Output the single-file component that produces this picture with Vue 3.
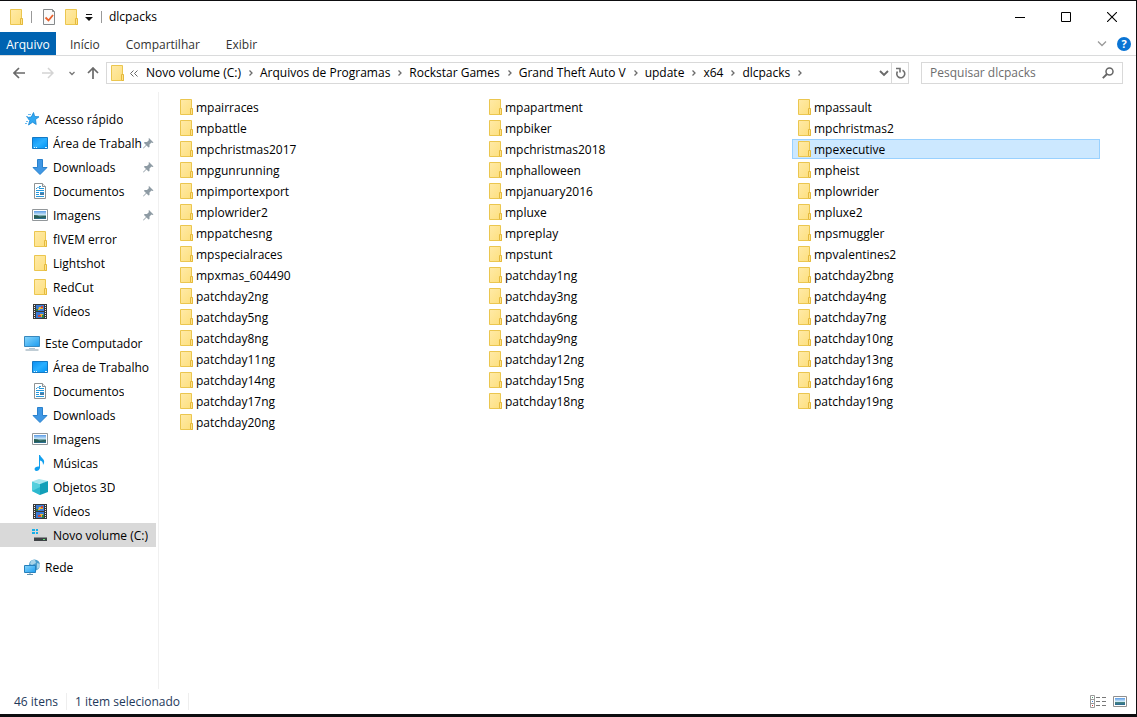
<script setup>
import { ref } from 'vue'

const tabs = ['Início', 'Compartilhar', 'Exibir']
const crumbs = ['Novo volume (C:)', 'Arquivos de Programas', 'Rockstar Games', 'Grand Theft Auto V', 'update', 'x64', 'dlcpacks']

const groups = [
  {
    name: 'Acesso rápido', icon: 'star',
    items: [
      { name: 'Área de Trabalho', icon: 'desktop', pinned: true },
      { name: 'Downloads', icon: 'download', pinned: true },
      { name: 'Documentos', icon: 'document', pinned: true },
      { name: 'Imagens', icon: 'picture', pinned: true },
      { name: 'fIVEM error', icon: 'folder' },
      { name: 'Lightshot', icon: 'folder' },
      { name: 'RedCut', icon: 'folder' },
      { name: 'Vídeos', icon: 'video' },
    ],
  },
  {
    name: 'Este Computador', icon: 'computer',
    items: [
      { name: 'Área de Trabalho', icon: 'desktop' },
      { name: 'Documentos', icon: 'document' },
      { name: 'Downloads', icon: 'download' },
      { name: 'Imagens', icon: 'picture' },
      { name: 'Músicas', icon: 'music' },
      { name: 'Objetos 3D', icon: 'cube' },
      { name: 'Vídeos', icon: 'video' },
      { name: 'Novo volume (C:)', icon: 'drive', current: true },
    ],
  },
  { name: 'Rede', icon: 'network', items: [] },
]

const files = [
  'mpairraces', 'mpapartment', 'mpassault',
  'mpbattle', 'mpbiker', 'mpchristmas2',
  'mpchristmas2017', 'mpchristmas2018', 'mpexecutive',
  'mpgunrunning', 'mphalloween', 'mpheist',
  'mpimportexport', 'mpjanuary2016', 'mplowrider',
  'mplowrider2', 'mpluxe', 'mpluxe2',
  'mppatchesng', 'mpreplay', 'mpsmuggler',
  'mpspecialraces', 'mpstunt', 'mpvalentines2',
  'mpxmas_604490', 'patchday1ng', 'patchday2bng',
  'patchday2ng', 'patchday3ng', 'patchday4ng',
  'patchday5ng', 'patchday6ng', 'patchday7ng',
  'patchday8ng', 'patchday9ng', 'patchday10ng',
  'patchday11ng', 'patchday12ng', 'patchday13ng',
  'patchday14ng', 'patchday15ng', 'patchday16ng',
  'patchday17ng', 'patchday18ng', 'patchday19ng',
  'patchday20ng',
]
const selected = ref('mpexecutive')
const query = ref('')
</script>

<template>
  <svg class="defs" aria-hidden="true">
    <defs>
      <linearGradient id="gFolder" x1="0" y1="0" x2="1" y2="1"><stop offset="0" stop-color="#ffeaa8" /><stop offset="1" stop-color="#fddf7c" /></linearGradient>
      <linearGradient id="gBlue" x1="0" y1="0" x2="1" y2="1"><stop offset="0" stop-color="#0a8df0" /><stop offset=".5" stop-color="#2bb0ff" /><stop offset="1" stop-color="#0094f5" /></linearGradient>
      <linearGradient id="gScreen" x1="0" y1="0" x2="1" y2="1"><stop offset="0" stop-color="#8ad6fb" /><stop offset="1" stop-color="#1a9cf0" /></linearGradient>
      <linearGradient id="gSky" x1="0" y1="0" x2="0" y2="1"><stop offset="0" stop-color="#5b9be6" /><stop offset=".5" stop-color="#cfeaf8" /><stop offset=".6" stop-color="#4b8580" /><stop offset="1" stop-color="#276a94" /></linearGradient>
      <symbol id="folder" viewBox="0 0 16 16">
        <path d="M2.500.5h11v9.500h1v5.500h-12z" fill="url(#gFolder)" stroke="#ebc64f" />
        <path d="M12.500 15v-5.500h2v6h-2" fill="#ffe38a" stroke="#e4b93c" />
      </symbol>
      <symbol id="star" viewBox="0 0 16 16">
        <path d="M9.500 1.500l1.200 4 4.300.3-3.500 2.700.7 5-3.600-2.300-4.100 2.800 1.300-4.700-2.500-2.800 4-.5z" fill="#31a8f2" stroke="#1686d4" stroke-width=".8" />
        <path d="M4 3.500h3M2 5.500h2M4 8.500h1M2 10.500h2M1 12.500h2" stroke="#6cbcf0" />
      </symbol>
      <symbol id="desktop" viewBox="0 0 16 16">
        <path d="M.5 2.500h15v11h-15z" fill="url(#gBlue)" stroke="#1479c4" />
        <path d="M2 12.500h1M13 12.500h2M4 12.500h1" stroke="#e5f6ff" />
      </symbol>
      <symbol id="download" viewBox="0 0 16 16">
        <path d="M5.500.5h5v8h4.500l-7 7-7-7h4.500z" fill="#3f97e4" stroke="#2981cd" />
      </symbol>
      <symbol id="document" viewBox="0 0 16 16">
        <path d="M2.500.5h8l3 3v12h-11z" fill="#fff" stroke="#8d9294" />
        <path d="M10.500.5v3h3" fill="#eee" stroke="#8d9294" />
        <path d="M4 5.500h1M7 3.500h2M7 5.500h5M4 7.500h8M4 9.500h3M4 11.500h3M4 13.500h8M8 9.500h4" stroke="#2598dc" />
        <path d="M5 4.500h3" stroke="#75bce5" /><path d="M8 10h4v2h-4z" fill="#4c7ca4" />
      </symbol>
      <symbol id="picture" viewBox="0 0 16 16">
        <path d="M.5 2.500h15v11h-15z" fill="#fff" stroke="#92979a" />
        <path d="M2 4h12v8H2z" fill="url(#gSky)" /><path d="M2 8q4 0 6 2 3-1 6-1v1.500l-12 1z" fill="#285e55" />
      </symbol>
      <symbol id="video" viewBox="0 0 16 16">
        <path d="M1 1h14v15H1z" fill="#393939" />
        <path d="M4 2h8v6H4zM4 9h8v6H4z" fill="#397bd6" />
        <path d="M2.500 2v13M13.500 2v13" stroke="#f1f1f1" stroke-dasharray="1 1" />
        <path d="M7 4h4v2H8v1H6zM8 11h3v3H8z" fill="#eab833" /><path d="M9 3h2v2H9zM6 12h3v2H6z" fill="#cf473d" /><path d="M4 6h2v2H4zM10 12h2v3h-2z" fill="#2c8147" />
      </symbol>
      <symbol id="computer" viewBox="0 0 16 16">
        <path d="M.5 1.500h15v10h-15z" fill="url(#gScreen)" stroke="#3888bd" />
        <path d="M5 13.500h6" stroke="#afc5d3" /><path d="M1.500 15h13" stroke="#829bab" />
      </symbol>
      <symbol id="music" viewBox="0 0 16 16">
        <path d="M7 0h1c1 3 5 4 4 8l-1 2c0-3-1-4-3-4.500v7.500Q7 16 4.500 16C1.500 15.500 2 11 7 11.500z" fill="#119fee" />
      </symbol>
      <symbol id="cube" viewBox="0 0 16 16">
        <path d="M0 2.500L7 0l9 2-7 3z" fill="#a5e6ef" /><path d="M0 2.500L8 5v11l-8-4z" fill="#55cfdd" /><path d="M8 5l8-3v11l-8 3z" fill="#129fb8" />
        <path d="M0 12l8-4v8z" fill="#2db8ce" />
      </symbol>
      <symbol id="drive" viewBox="0 0 16 16">
        <path d="M0 2h3v2H0zM4 2h2v2H4zM0 5h3v2H0zM4 5h2v2H4z" fill="#17afe8" />
        <path d="M4 8h9l2 3H2z" fill="#d5d7d8" /><path d="M2 10.500h13V14H2z" fill="#3e4246" /><path d="M11 12.500h2" stroke="#65e777" />
      </symbol>
      <symbol id="network" viewBox="0 0 16 16">
        <circle cx="10.500" cy="6" r="5.500" fill="#4a9dcc" /><path d="M7 2q3-2 4-1l1 3-4 2-2-1zM13 4l3 1v3l-3 2z" fill="#a9d4e8" />
        <path d="M.5 6.500h11v7H.5z" fill="url(#gScreen)" stroke="#2680bc" /><path d="M6 13.500v2M3 15.500h6" stroke="#6291ae" />
      </symbol>
      <symbol id="pin" viewBox="0 0 11 12">
        <path d="M6 1l4.500 4.500-1 .5-1-.5-2 2v2.500l-1 .5-2-2L.5 11.500 0 11l3-3-2-2 .5-1H4l2-2-.5-1z" fill="#8e9ba4" />
      </symbol>
      <symbol id="chevron" viewBox="0 0 8 8"><path d="M2.500 1.500L5 4 2.500 6.500" fill="none" stroke="#6b6b6b" stroke-width="1.300" /></symbol>
    </defs>
  </svg>

  <div class="desk">
    <main class="window">
      <header class="title-bar">
        <svg class="ico"><use href="#folder" /></svg>
        <i class="rule" />
        <button class="quick" aria-label="Propriedades">
          <svg class="ico" viewBox="0 0 16 16">
            <path d="M2.500.5h9l2 2v13h-11z" fill="#fafafa" stroke="#85898b" /><path d="M11.500.5v2h2" fill="none" stroke="#85898b" />
            <path d="M4.500 8.500l3 3L12 6" fill="none" stroke="#e8602c" stroke-width="1.800" />
          </svg>
        </button>
        <button class="quick" aria-label="Nova pasta"><svg class="ico"><use href="#folder" /></svg></button>
        <button class="quick more" aria-label="Personalizar">
          <svg width="8" height="8" viewBox="0 0 8 8"><path d="M1 1.500h6" stroke="#111" /><path d="M0 4h8L4 8z" fill="#111" /></svg>
        </button>
        <i class="rule" />
        <h1>dlcpacks</h1>
        <div class="controls">
          <button aria-label="Minimizar"><svg width="10" height="10"><path d="M0 5.500h10" stroke="#000" /></svg></button>
          <button aria-label="Maximizar"><svg width="10" height="10"><path d="M.5.5h9v9h-9z" fill="none" stroke="#000" /></svg></button>
          <button aria-label="Fechar"><svg width="10" height="10"><path d="M0 0l10 10M10 0L0 10" stroke="#000" stroke-width="1.100" /></svg></button>
        </div>
      </header>

      <nav class="ribbon" aria-label="Faixa de opções">
        <button class="tab file">Arquivo</button>
        <button v-for="t in tabs" :key="t" class="tab">{{ t }}</button>
        <button class="expand" aria-label="Expandir"><svg width="10" height="6"><path d="M1 .5l4 4 4-4" fill="none" stroke="#9a9a9a" stroke-width="1.300" /></svg></button>
        <button class="help" aria-label="Ajuda">?</button>
      </nav>

      <div class="nav-bar">
        <div class="arrows">
          <button aria-label="Voltar"><svg width="12" height="12"><path d="M12 6H1M6 1L1 6l5 5" fill="none" stroke="#6a6a6a" stroke-width="1.700" /></svg></button>
          <button aria-label="Avançar" disabled><svg width="12" height="12"><path d="M0 6h11M6 1l5 5-5 5" fill="none" stroke="#d4d4d4" stroke-width="1.500" /></svg></button>
          <button class="recent" aria-label="Recentes"><svg width="6" height="5"><path d="M.5 1L3 3.500 5.500 1" fill="none" stroke="#777" stroke-width="1.300" /></svg></button>
          <button aria-label="Acima"><svg width="12" height="12"><path d="M6 12V1M1 6l5-5 5 5" fill="none" stroke="#6a6a6a" stroke-width="1.700" /></svg></button>
        </div>
        <div class="address">
          <svg class="ico"><use href="#folder" /></svg>
          <svg class="back" width="8" height="7"><path d="M3.500.5l-3 3 3 3M7.500.5l-3 3 3 3" fill="none" stroke="#666" /></svg>
          <div class="crumbs">
            <template v-for="c in crumbs" :key="c">
              <a href="#" @click.prevent>{{ c }}</a>
              <svg class="chev"><use href="#chevron" /></svg>
            </template>
          </div>
          <button class="drop" aria-label="Locais anteriores"><svg width="10" height="7"><path d="M1 1l4 4 4-4" fill="none" stroke="#6a6a6a" stroke-width="1.900" /></svg></button>
          <button class="reload" aria-label="Atualizar">
            <svg width="11" height="12"><path d="M2.500 4.500A4 4 0 1 0 7.500 3.200M1 1.500h4v4" fill="none" stroke="#707070" stroke-width="1.600" /></svg>
          </button>
        </div>
        <div class="search">
          <input v-model="query" type="text" placeholder="Pesquisar dlcpacks" aria-label="Pesquisar dlcpacks">
          <svg width="12" height="12"><circle cx="7.500" cy="4.500" r="3.500" fill="none" stroke="#666" stroke-width="1.500" /><path d="M5 7L.8 11.200" stroke="#666" stroke-width="1.900" /></svg>
        </div>
      </div>

      <div class="body">
        <nav class="tree" aria-label="Painel de navegação">
          <section v-for="g in groups" :key="g.name">
            <a href="#" class="node" @click.prevent><svg class="ico"><use :href="'#' + g.icon" /></svg><span>{{ g.name }}</span></a>
            <a v-for="n in g.items" :key="n.name" href="#" class="node child" :class="{ current: n.current, pinned: n.pinned }" @click.prevent>
              <svg class="ico"><use :href="'#' + n.icon" /></svg><span>{{ n.name }}</span>
              <svg v-if="n.pinned" class="pin"><use href="#pin" /></svg>
            </a>
          </section>
        </nav>
        <div class="files">
          <button v-for="f in files" :key="f" class="item" :class="{ selected: f === selected }" @click="selected = f">
            <svg class="ico"><use href="#folder" /></svg><span>{{ f }}</span>
          </button>
        </div>
      </div>

      <footer class="status">
        <span>46 itens</span><span>1 item selecionado</span>
        <div class="views">
          <button aria-label="Detalhes">
            <svg width="16" height="13"><path d="M.5.500h4v12h-4zM.5 4.500h4M.5 8.500h4" fill="#fff" stroke="#9a9a9a" /><path d="M6 2.500h4M12 2.500h4M6 6.500h4M12 6.500h4M6 10.500h4M12 10.500h4" stroke="#777" /><path d="M2 2.500h1" stroke="#4a9a6a" /><path d="M2 6.500h1" stroke="#3f80d8" /><path d="M2 10.500h1" stroke="#d32f2f" /></svg>
          </button>
          <button aria-label="Ícones grandes">
            <svg width="14" height="11"><path d="M.5.500h13v10H.5z" fill="#fff" stroke="#8f8f8f" /><path d="M2 2h10v7H2z" fill="url(#gSky)" /></svg>
          </button>
        </div>
      </footer>
    </main>
  </div>
</template>

<style>
body { background: #0d0d0f; }
</style>

<style scoped>
.defs { position: absolute; width: 0; height: 0; }
.desk { box-sizing: border-box; height: 100vh; padding: 1px 1px 3px 0; background: #0d0d0f; }
.window { display: flex; flex-direction: column; height: 100%; background: #fff; color: #000; font: 12px/16px "Segoe UI", "Open Sans", "Noto Sans", sans-serif; }
button { margin: 0; padding: 0; border: 0; background: none; color: inherit; font: inherit; display: flex; align-items: center; justify-content: center; }
a { color: inherit; text-decoration: none; }
svg { display: block; flex: none; }
.ico { width: 16px; height: 16px; }

.title-bar { display: flex; align-items: center; height: 31px; flex: none; padding-left: 8px; }
.rule { width: 1px; height: 12px; background: #999; margin: 0 9px 0 7px; }
.quick { margin-right: 6px; }
.quick.more { margin: 0; }
.more + .rule { margin: 0 7px 0 8px; }
h1 { margin: 0; font: inherit; }
.controls { display: flex; margin: 0 1px 0 auto; align-self: stretch; }
.controls button { width: 46px; }

.ribbon { display: flex; align-items: center; height: 23px; flex: none; border-bottom: 1px solid #dadbdc; color: #333; }
.tab { height: 23px; padding: 2px 13px 0; }
.tab.file { width: 56px; padding: 2px 0 0; margin-right: 1px; background: #0063b1; color: #fff; }
.expand { margin-left: auto; }
.help { width: 14px; height: 14px; margin: 0 5px 0 10px; border-radius: 50%; background: #0a74d4; color: #fff; font-size: 11px; line-height: 14px; font-weight: 700; }

.nav-bar { display: flex; align-items: center; height: 34px; flex: none; }
.arrows { display: flex; align-items: center; width: 93px; padding-left: 13px; gap: 17px; }
.arrows .recent { margin: 0 -5px 0 -2px; }
.address, .search { box-sizing: border-box; height: 22px; border: 1px solid #d9d9d9; display: flex; align-items: center; }
.address { flex: 1; min-width: 0; padding-left: 2px; }
.back { margin: 0 8px 0 5px; }
.crumbs { display: flex; align-items: center; flex: 1; min-width: 0; overflow: hidden; white-space: nowrap; }
.chev { width: 8px; height: 8px; margin: 0 5px 0 6px; }
.drop { width: 14px; }
.reload { align-self: stretch; width: 17px; border-left: 1px solid #d9d9d9; }
.search { width: 202px; margin: 0 13px 0 12px; padding: 0 8px; }
.search input { flex: 1; min-width: 0; border: 0; padding: 0; outline: 0; background: none; font: inherit; color: #000; }
.search input::placeholder { color: #6d6d6d; opacity: 1; }

.body { display: flex; flex: 1; min-height: 0; }
.tree { box-sizing: border-box; width: 159px; flex: none; margin-top: 2px; padding-top: 15px; border-right: 1px solid #f0f0f0; overflow: hidden; }
.tree section { margin-bottom: 8px; }
.node { display: flex; align-items: center; height: 24px; margin-right: 2px; padding-left: 24px; white-space: nowrap; }
.node.child { padding-left: 32px; }
.node span { margin-left: 5px; padding-top: 1px; overflow: hidden; }
.node.pinned span { flex: 1; }
.node.current { background: #d9d9d9; }
.pin { width: 11px; height: 12px; margin: 0 2px 0 1px; }

.files { flex: 1; display: grid; grid-template-columns: repeat(3, minmax(0, 1fr)); grid-auto-rows: 20px; gap: 1px; align-content: start; padding: 7px 36px 0 15px; }
.item { box-sizing: border-box; justify-content: flex-start; padding-left: 3px; border: 1px solid transparent; }
.item span { margin-left: 2px; padding-top: 1px; }
.item.selected { background: #cce8ff; border-color: #99d1ff; }

.status { display: flex; align-items: center; height: 25px; flex: none; padding-left: 14px; color: #1e395b; }
.status span { padding-right: 8px; margin-right: 8px; padding-top: 1px; border-right: 1px solid #eee; }
.views { display: flex; align-items: center; gap: 7px; margin: 0 9px 0 auto; }
</style>
